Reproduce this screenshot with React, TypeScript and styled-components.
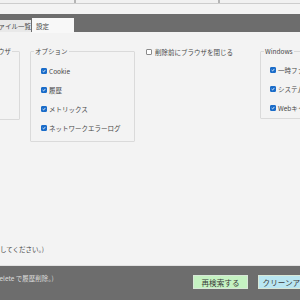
import React from "react";
import styled, { createGlobalStyle } from "styled-components";

const GlobalStyle = createGlobalStyle`
  html, body { margin: 0; padding: 0; }
  body {
    width: 300px;
    height: 300px;
    overflow: hidden;
    background: #f3f3f3;
    font-family: "Noto Sans CJK JP", "Noto Sans", sans-serif;
    font-size: 6.5px;
    color: #474747;
  }
`;

const Window = styled.div`
  width: 300px;
  height: 300px;
  display: flex;
  flex-direction: column;
  overflow: hidden;
`;

const TopStrip = styled.div`
  height: 3px;
  flex: none;
  display: flex;
  background: #f1f1f1;
  border-bottom: 1px solid #cdcdcd;
`;

const Tick = styled.div<{ $ml: number }>`
  width: 2px;
  height: 3px;
  margin-left: ${(p) => p.$ml}px;
  background: #b5b5b5;
`;

const TopGap = styled.div`
  height: 10px;
  flex: none;
  background: #f3f3f3;
`;

const TabBar = styled.div`
  height: 18px;
  flex: none;
  display: flex;
  align-items: flex-end;
  background: #6d6d6d;
  position: relative;
  z-index: 1;
`;

const Tab = styled.div<{ $active?: boolean }>`
  box-sizing: border-box;
  display: flex;
  align-items: center;
  white-space: nowrap;
  overflow: hidden;
  height: ${(p) => (p.$active ? 15 : 12)}px;
  margin-bottom: ${(p) => (p.$active ? -1 : 0)}px;
  background: ${(p) => (p.$active ? "#f8f8f8" : "#e9e9e9")};
  width: ${(p) => (p.$active ? 42 : 31)}px;
  margin-left: ${(p) => (p.$active ? 1 : 0)}px;
  padding-left: ${(p) => (p.$active ? 4 : 0)}px;
  justify-content: ${(p) => (p.$active ? "flex-start" : "flex-end")};
`;

const Content = styled.div`
  flex: 1;
  display: flex;
  flex-direction: column;
  overflow: hidden;
  background: #f3f3f3;
`;

const Row = styled.div`
  display: flex;
  align-items: flex-start;
  margin-top: 15px;
  margin-left: -20px;
`;

const Group = styled.fieldset<{ $w: number; $h: number; $ml: number }>`
  box-sizing: border-box;
  flex: none;
  width: ${(p) => p.$w}px;
  height: ${(p) => p.$h}px;
  margin: 0 0 0 ${(p) => p.$ml}px;
  padding: 0;
  min-width: 0;
  border: 1px solid #dadada;
  border-radius: 1px;
`;

const Legend = styled.legend`
  margin-left: 3px;
  padding: 0 1px;
  line-height: 9px;
  white-space: nowrap;
`;

const List = styled.div<{ $pt: number; $pl: number }>`
  display: flex;
  flex-direction: column;
  padding-top: ${(p) => p.$pt}px;
  padding-left: ${(p) => p.$pl}px;
`;

const Item = styled.label`
  height: 19px;
  display: flex;
  align-items: center;
  gap: 2px;
  white-space: nowrap;
`;

const Box = styled.span<{ $checked?: boolean }>`
  box-sizing: border-box;
  flex: none;
  width: 6px;
  height: 6px;
  border-radius: 1px;
  display: flex;
  align-items: center;
  justify-content: center;
  background: ${(p) => (p.$checked ? "#1a6cc9" : "#ffffff")};
  border: 1px solid ${(p) => (p.$checked ? "#1a6cc9" : "#8a8a8a")};
`;

const Standalone = styled.label`
  flex: none;
  width: 103px;
  margin-left: 11px;
  height: 9px;
  display: flex;
  align-items: center;
  gap: 3px;
  white-space: nowrap;
`;

const Note = styled.div`
  margin-top: auto;
  margin-bottom: 11px;
  line-height: 9px;
  white-space: nowrap;
`;

const Footer = styled.div`
  height: 34px;
  flex: none;
  background: #6d6d6d;
  border-top: 1px solid #e2e2e2;
  overflow: hidden;
`;

const FooterInner = styled.div`
  width: 330px;
  display: flex;
  align-items: flex-start;
`;

const FooterText = styled.div`
  flex: 1;
  margin-top: 8px;
  margin-left: -5px;
  line-height: 9px;
  color: #dcdcdc;
  white-space: nowrap;
`;

const Button = styled.div<{ $bg: string; $w: number }>`
  box-sizing: border-box;
  width: ${(p) => p.$w}px;
  height: 14px;
  margin-top: 9px;
  margin-right: 10px;
  display: flex;
  align-items: center;
  justify-content: center;
  background: ${(p) => p.$bg};
  border: 1px solid #d8e8d8;
  font-size: 7.6px;
  color: #3a3a3a;
  white-space: nowrap;
`;

const Check = () => (
  <svg width="4" height="4" viewBox="0 0 4 4">
    <path d="M0.6 2.1 L1.6 3 L3.4 0.9" fill="none" stroke="#fff" strokeWidth="0.8" />
  </svg>
);

const CheckItem = ({ label }: { label: string }) => (
  <Item>
    <Box $checked>
      <Check />
    </Box>
    {label}
  </Item>
);

export default function App() {
  return (
    <>
      <GlobalStyle />
      <Window>
        <TopStrip>
          <Tick $ml={74} />
          <Tick $ml={142} />
        </TopStrip>
        <TopGap />
        <TabBar>
          <Tab>ファイル一覧</Tab>
          <Tab $active>設定</Tab>
        </TabBar>
        <Content>
          <Row>
            <Group $w={40} $h={73} $ml={0}>
              <Legend>ブラウザ</Legend>
            </Group>
            <Group $w={105} $h={95} $ml={10}>
              <Legend>オプション</Legend>
              <List $pt={5} $pl={10}>
                <CheckItem label="Cookie" />
                <CheckItem label="履歴" />
                <CheckItem label="メトリックス" />
                <CheckItem label="ネットワークエラーログ" />
              </List>
            </Group>
            <Standalone>
              <Box />
              削除前にブラウザを閉じる
            </Standalone>
            <Group $w={80} $h={72} $ml={11}>
              <Legend>Windows</Legend>
              <List $pt={4} $pl={9}>
                <CheckItem label="一時ファイル" />
                <CheckItem label="システムログ" />
                <CheckItem label="Webキャッシュ" />
              </List>
            </Group>
          </Row>
          <Note>してください。)</Note>
        </Content>
        <Footer>
          <FooterInner>
            <FooterText>Delete で履歴削除。)</FooterText>
            <Button $bg="#c5f2c2" $w={55}>再検索する</Button>
            <Button $bg="#b9e6f1" $w={62}>クリーンアップ</Button>
          </FooterInner>
        </Footer>
      </Window>
    </>
  );
}
